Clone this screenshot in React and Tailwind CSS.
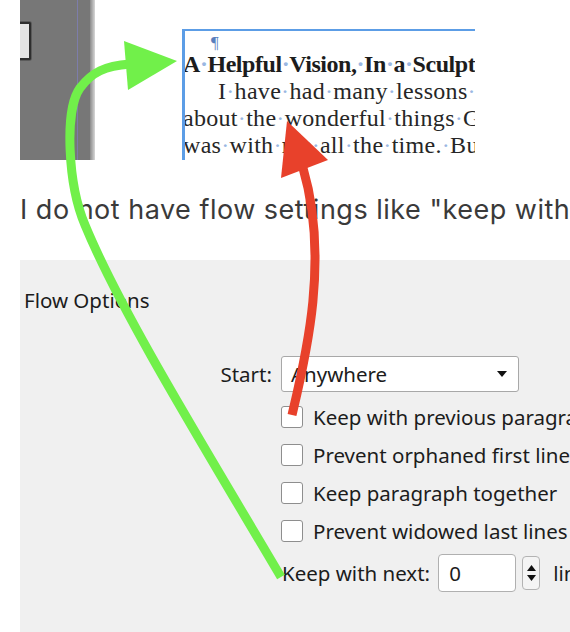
const D = () => <span className="text-[#9ab7e2]">·</span>;

function Checkbox() {
  return <div className="w-[22px] h-[22px] rounded-[3px] border border-[#8e8e8e] bg-white shrink-0" />;
}

function CheckRow({ label }) {
  return (
    <div className="h-[38px] flex items-center gap-[10px] whitespace-nowrap">
      <Checkbox />
      <span className="leading-[28px]">{label}</span>
    </div>
  );
}

export default function App() {
  return (
    <div className="relative w-[570px] h-[632px] bg-white overflow-hidden">
      {/* top screenshot */}
      <div className="ml-[20px] w-[455px] h-[160px] flex overflow-hidden">
        <div className="w-[75px] h-full bg-[#777777] flex shrink-0">
          <div className="w-[11px] mt-[22px] h-[38px] bg-[#e4e4e4] border-t-2 border-b-2 border-r-2 border-[#2e2e2e] rounded-r-[2px] shadow-[0_0_0_1px_#5a5a5a]" />
          <div className="w-[46px]" />
          <div className="w-px h-full bg-[#7d7daa]" />
          <div className="w-[12px]" />
          <div className="w-[5px] h-full bg-gradient-to-r from-[#8a8a8a] to-[#d8d8d8]" />
        </div>
        <div className="flex-1 h-full bg-white pl-[87px] pt-[29px] flex">
          <div className="flex-1 border-t-2 border-l-[3px] border-[#5c9de6] overflow-hidden font-['Liberation_Serif',serif] text-[#262626] whitespace-nowrap">
            <div className="h-[20px] pl-[26px] pt-[3px] text-[17px] leading-[17px] text-[#5a7fbd]">¶</div>
            <div className="text-[24px] leading-[27px] font-bold tracking-[-0.45px] -ml-[2px] text-[#1c1c1c]">
              A<D />Helpful<D />Vision,<D />In<D />a<D />Sculpture
            </div>
            <div className="text-[24px] leading-[27px] tracking-[0.3px] pl-[33px]">
              I<D />have<D />had<D />many<D />lessons<D />about
            </div>
            <div className="text-[24px] leading-[27px] tracking-[0.3px] -ml-[2px]">
              about<D />the<D />wonderful<D />things<D />God
            </div>
            <div className="text-[24px] leading-[27px] tracking-[0.3px] -ml-[2px]">
              was<D />with<D />me<D />all<D />the<D />time.<D />But
            </div>
          </div>
        </div>
      </div>

      {/* paragraph */}
      <div className="mt-[34px] ml-[20px] font-['Inter',sans-serif] text-[27px] leading-[32px] tracking-[0.5px] text-[#3a3a3a] whitespace-nowrap overflow-hidden">
        I do not have flow settings like "keep with next"
      </div>

      {/* dialog */}
      <div className="mt-[34px] ml-[20px] w-[550px] h-[372px] bg-[#f0f0f0] overflow-hidden font-['Noto_Sans',sans-serif] text-[20.5px] text-[#1c1c1c]">
        <div className="pl-[4px] pt-[26px] leading-[28px]">Flow Options</div>
        <div className="mt-[42px] flex">
          <div className="w-[261px] shrink-0 flex flex-col">
            <div className="h-[36px] flex items-center justify-end pr-[9px] leading-[28px]">Start:</div>
          </div>
          <div className="flex flex-col">
            <div className="w-[238px] h-[36px] rounded-[3px] border border-[#a8a8a8] bg-white flex items-center justify-between pl-[9px] pr-[11px]">
              <span className="leading-[28px]">Anywhere</span>
              <svg width="10" height="6" viewBox="0 0 10 6"><polygon points="0,0 10,0 5,6" fill="#111" /></svg>
            </div>
            <div className="h-[6px]" />
            <CheckRow label="Keep with previous paragraph" />
            <CheckRow label="Prevent orphaned first lines" />
            <CheckRow label="Keep paragraph together" />
            <CheckRow label="Prevent widowed last lines" />
            <div className="mt-[4px] h-[38px] flex items-center whitespace-nowrap">
              <span className="leading-[28px] ml-px">Keep with next:</span>
              <div className="ml-[8px] w-[78px] h-[38px] rounded-[4px] border border-[#b0b0b0] bg-white flex items-center pl-[10px]">
                <span className="leading-[28px]">0</span>
              </div>
              <div className="ml-[6px] w-[18px] h-[34px] rounded-[4px] border border-[#b3b3b3] bg-[#f4f4f4] flex flex-col items-center justify-center gap-[4px]">
                <svg width="9" height="6" viewBox="0 0 9 6"><polygon points="0,6 9,6 4.5,0" fill="#111" /></svg>
                <svg width="9" height="6" viewBox="0 0 9 6"><polygon points="0,0 9,0 4.5,6" fill="#111" /></svg>
              </div>
              <span className="ml-[13px] leading-[28px]">lines</span>
            </div>
          </div>
        </div>
      </div>

      {/* annotation arrows */}
      <svg className="absolute inset-0 pointer-events-none" width="570" height="632" viewBox="0 0 570 632">
        <path d="M 281 577 C 200 440, 120 310, 85 225 C 68 185, 64 110, 80 88 C 92 72, 105 66, 130 64" stroke="#71f04a" strokeWidth="9" fill="none" />
        <polygon points="124,41 177,61 128,90" fill="#71f04a" />
        <path d="M 292 415 C 305 360, 330 260, 303 168" stroke="#e8412b" strokeWidth="9" fill="none" />
        <polygon points="287,121 328,160 281,178" fill="#e8412b" />
      </svg>
    </div>
  );
}
